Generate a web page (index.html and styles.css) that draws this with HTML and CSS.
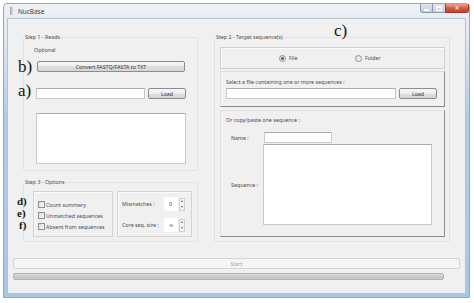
FILE: index.html
```html
<!DOCTYPE html>
<html>
<head>
<meta charset="utf-8">
<link rel="stylesheet" href="styles.css">
</head>
<body>
<div class="window">
  <div class="titlebar">
    <span class="appicon"></span>
    <span class="title">NucBase</span>
    <div class="controls">
      <span class="ctl ctl-min"><i></i></span>
      <span class="ctl ctl-max"><i></i></span>
      <span class="ctl ctl-close">×</span>
    </div>
  </div>
  <div class="client">
    <div class="columns">
      <div class="leftcol">
        <div class="group step1">
          <span class="group-title">Step 1 - Reads</span>
          <div class="optional">Optional</div>
          <button class="btn btn-convert">Convert FASTQ/FASTA to TXT</button>
          <div class="row reads-row">
            <div class="input reads-input"></div>
            <button class="btn btn-load">Load</button>
          </div>
          <div class="input reads-area"></div>
        </div>
        <div class="group step3">
          <span class="group-title">Step 3 - Options</span>
          <div class="optboxes">
            <div class="optbox checks">
              <div class="check-row"><span class="checkbox"></span>Count summary</div>
              <div class="check-row"><span class="checkbox"></span>Unmatched sequences</div>
              <div class="check-row"><span class="checkbox"></span>Absent from sequences</div>
            </div>
            <div class="optbox spins">
              <div class="spin-row">
                <span class="spin-label">Mismatches :</span>
                <span class="spin-input">0</span>
                <span class="spinner"><i class="up"></i><i class="down"></i></span>
              </div>
              <div class="spin-row">
                <span class="spin-label">Core seq. size :</span>
                <span class="spin-input">∞</span>
                <span class="spinner"><i class="up"></i><i class="down"></i></span>
              </div>
            </div>
          </div>
        </div>
      </div>
      <div class="group step2">
        <span class="group-title">Step 2 - Target sequence(s)</span>
        <div class="radiobox">
          <span class="radio-item"><span class="radio checked"></span>File</span>
          <span class="radio-item"><span class="radio"></span>Folder</span>
        </div>
        <div class="panel file-panel">
          <div class="panel-label">Select a file containing one or more sequences :</div>
          <div class="row file-row">
            <div class="input file-input"></div>
            <button class="btn btn-load">Load</button>
          </div>
        </div>
        <div class="panel paste-panel">
          <div class="panel-label">Or copy/paste one sequence :</div>
          <div class="row name-row">
            <span class="field-label">Name :</span>
            <div class="input name-input"></div>
          </div>
          <div class="row seq-row">
            <span class="field-label">Sequence :</span>
            <div class="input seq-area"></div>
          </div>
        </div>
      </div>
    </div>
    <button class="start">Start</button>
    <div class="progress"></div>
  </div>
  <span class="note note-b">b)</span>
  <span class="note note-a">a)</span>
  <span class="note note-c">c)</span>
  <div class="note note-def">d)<br>e)<br><span class="note-f">f)</span></div>
</div>
</body>
</html>
```
FILE: styles.css
```css
* { box-sizing: border-box; }
body {
  margin: 0;
  padding: 3px 0 0 3px;
  background: #fff;
  font-family: "Noto Sans", "DejaVu Sans", sans-serif;
  font-size: 5.3px;
  color: #4a4a4a;
}
.window {
  position: relative;
  width: 467px;
  height: 295px;
  border: 1px solid #9aa6b2;
  border-radius: 4px 4px 0 0;
  background: linear-gradient(#eef1f4 0, #e3e9ef 30px, #b2cde8 110px, #a8c8e8 100%);
  display: flex;
  flex-direction: column;
  padding: 0 3px 3px 3px;
}
.titlebar {
  height: 14px;
  display: flex;
  align-items: center;
  flex-shrink: 0;
}
.appicon {
  width: 3px;
  height: 8px;
  margin-left: 3px;
  background: linear-gradient(90deg, #9aa9b8, #d7dee5);
}
.title {
  margin-left: 5px;
  font-size: 6.4px;
  color: #3a3a3a;
}
.controls {
  margin-left: auto;
  margin-right: -3px;
  align-self: flex-start;
  display: flex;
  height: 9px;
}
.ctl {
  height: 9px;
  display: flex;
  align-items: center;
  justify-content: center;
  border: 1px solid #8b9aab;
  border-top: 0;
}
.ctl-min { width: 12px; border-radius: 0 0 0 3px; background: linear-gradient(#dde4ec, #c3cfdb); border-right: 0; }
.ctl-max { width: 13px; background: linear-gradient(#dde4ec, #c3cfdb); border-right: 0; }
.ctl-close {
  width: 24px;
  border-radius: 0 0 3px 0;
  background: linear-gradient(#e9a396, #d4573f 55%, #c7432c);
  border-color: #9b3a2c;
  color: #fff;
  font-size: 8px;
  line-height: 8px;
}
.ctl-min i { width: 5px; height: 2px; background: #fff; margin-top: 3px; }
.ctl-max i { width: 6px; height: 5px; border: 1px solid #fff; border-top-width: 2px; }

.client {
  flex: 1;
  background: #f0f0f0;
  border: 1px solid #b6c2cf;
  padding: 18px 0 0 0;
  overflow: hidden;
}
.columns { display: flex; gap: 16px; padding-left: 15px; }
.leftcol { width: 175px; display: flex; flex-direction: column; }

.group {
  border: 1px solid #e2e2e2;
  border-radius: 2px;
}
.group-title {
  display: block;
  width: max-content;
  margin: -4px 0 0 0;
  padding: 0 1px;
  height: 7px;
  line-height: 7px;
  background: #f0f0f0;
}
.step1 { height: 134px; }
.step3 { height: 60px; margin-top: 11px; }
.step2 { width: 236px; height: 205px; }

.optional { margin: 5px 0 0 10px; line-height: 8px; }
.btn {
  display: flex;
  align-items: center;
  justify-content: center;
  padding: 0;
  font: inherit;
  color: #333;
  border: 1px solid #8c8c8c;
  border-radius: 2px;
  background: linear-gradient(#f7f7f7, #ececec 50%, #dedede 50%, #d6d6d6);
  height: 11px;
}
.btn-convert { margin: 7px 0 0 13px; width: 148px; }
.row { display: flex; }
.reads-row { margin: 16px 0 0 12px; }
.input {
  background: #fff;
  border: 1px solid #c9c9c9;
  border-top-color: #a9abae;
}
.reads-input { width: 109px; height: 11px; }
.btn-load { width: 38px; margin-left: 3px; }
.reads-area { margin: 14px 0 0 12px; width: 150px; height: 51px; }

.optboxes { display: flex; gap: 4px; margin: 5px 0 0 9px; }
.optbox {
  height: 46px;
  border: 1px solid #d3d3d3;
  box-shadow: inset 1px 1px #fbfbfb;
}
.checks { width: 80px; padding: 7px 0 0 4px; }
.check-row { display: flex; align-items: center; height: 11px; }
.checkbox {
  width: 7px;
  height: 7px;
  margin-right: 1px;
  border: 1px solid #8f8f8f;
  background: linear-gradient(135deg, #dcdcdc, #fafafa);
}
.spins { width: 75px; padding: 5px 0 0 4px; }
.spin-row { display: flex; align-items: center; height: 14px; }
.spin-row + .spin-row { margin-top: 7px; }
.spin-label { width: 42px; }
.spin-input {
  width: 14px;
  height: 14px;
  background: #fff;
  display: flex;
  align-items: center;
  padding-left: 5px;
  color: #333;
}
.spinner {
  width: 6px;
  height: 13px;
  margin-left: 1px;
  display: flex;
  flex-direction: column;
  justify-content: space-around;
  align-items: center;
  border: 1px solid #d0d0d0;
  background: #f4f4f4;
}
.spinner i { width: 0; height: 0; border-left: 1.5px solid transparent; border-right: 1.5px solid transparent; }
.spinner .up { border-bottom: 2px solid #666; }
.spinner .down { border-top: 2px solid #666; }

.radiobox {
  margin: 6px 0 0 5px;
  width: 225px;
  height: 22px;
  border: 1px solid #cfcfcf;
  box-shadow: inset 1px 1px #fbfbfb;
  display: flex;
  align-items: center;
  padding-left: 58px;
}
.radio-item { display: flex; align-items: center; width: 76px; }
.radio {
  width: 7px;
  height: 7px;
  border-radius: 50%;
  border: 1px solid #8f8f8f;
  background: linear-gradient(135deg, #d8d8d8, #fafafa);
  margin-right: 3px;
  display: flex;
  align-items: center;
  justify-content: center;
}
.radio.checked::after {
  content: "";
  width: 3px;
  height: 3px;
  border-radius: 50%;
  background: #4b5d6e;
}

.panel {
  margin-left: 5px;
  width: 225px;
  border: 1px solid #dedede;
  border-right-color: #8a8a8a;
  border-bottom-color: #8a8a8a;
}
.file-panel { margin-top: 2px; height: 36px; }
.paste-panel { margin-top: 3px; height: 127px; }
.panel-label { margin: 5px 0 0 5px; line-height: 8px; }
.file-panel .panel-label { margin-top: 6px; }
.file-row { margin: 2px 0 0 5px; }
.file-input { width: 170px; height: 11px; }
.file-row .btn-load { margin-left: 3px; }
.name-row { margin: 8px 0 0 10px; align-items: center; }
.field-label { width: 33px; }
.name-input { width: 68px; height: 11px; }
.seq-row { margin: 1px 0 0 10px; align-items: center; }
.seq-row .field-label { width: 32px; }
.seq-area { width: 169px; height: 81px; }

.start {
  display: block;
  margin: 16px 0 0 5px;
  width: 447px;
  height: 11px;
  padding: 0;
  font: inherit;
  color: #a4a4a4;
  background: #f5f5f5;
  border: 1px solid #d4d4d4;
  border-radius: 2px;
}
.progress {
  margin: 4px 0 0 5px;
  width: 431px;
  height: 7px;
  border: 1px solid #b2b2b2;
  border-radius: 2px;
  background: linear-gradient(#dcdcdc, #c6c6c6 60%, #cfcfcf);
}

.note {
  position: absolute;
  font-family: "Liberation Serif", serif;
  font-size: 17px;
  line-height: 17px;
  color: #151515;
}
.note-b { left: 14px; top: 54px; }
.note-a { left: 14px; top: 78px; }
.note-c { left: 330px; top: 18px; }
.note-def {
  left: 13px;
  top: 191px;
  font-size: 11px;
  line-height: 12.2px;
  font-weight: bold;
}
.note-f { margin-left: 2px; }
```
